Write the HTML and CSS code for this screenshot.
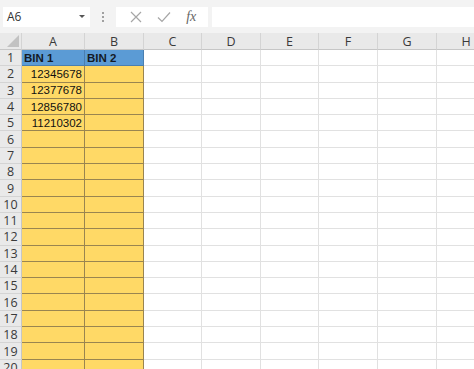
FILE: index.html
```html
<!DOCTYPE html>
<html lang="en">
<head>
  <meta charset="UTF-8">
  <title>Bins</title>
  <link rel="stylesheet" href="styles.css">
</head>
<body>

  <div class="toolbar">
    <div class="namebox">
      <span>A6</span>
      <span class="caret"></span>
    </div>
    <div class="grip">
      <i></i><i></i><i></i>
    </div>
    <div class="fbuttons">
      <svg width="12" height="12" viewBox="0 0 12 12"><path d="M1 1 L11 11 M11 1 L1 11" stroke="#a6a6a6" stroke-width="1.2" fill="none"/></svg>
      <svg width="14" height="12" viewBox="0 0 14 12"><path d="M1 6.5 L5 10.5 L13 1.5" stroke="#a6a6a6" stroke-width="1.2" fill="none"/></svg>
      <span class="fx">fx</span>
    </div>
    <div class="formula"></div>
  </div>

  <div class="sheet" id="sheet"></div>

  <script>
    const cols = ['A', 'B', 'C', 'D', 'E', 'F', 'G', 'H'];
    const data = { A2: '12345678', A3: '12377678', A4: '12856780', A5: '11210302' };
    const sheet = document.getElementById('sheet');

    function cell(cls, text) {
      const el = document.createElement('div');
      el.className = cls;
      if (text) el.textContent = text;
      sheet.appendChild(el);
    }

    cell('corner');
    cols.forEach(c => cell('colhead', c));

    for (let row = 1; row <= 20; row++) {
      cell('rowhead', row);
      cols.forEach((c, i) => {
        let cls = 'cell';
        if (i < 2) cls += row === 1 ? ' head' : ' bin';
        let text = data[c + row] || '';
        if (row === 1 && i < 2) text = 'BIN ' + (i + 1);
        if (c === 'A' && row > 1) cls += ' num';
        cell(cls, text);
      });
    }
  </script>

</body>
</html>
```

FILE: styles.css
```css
body {
  margin: 0;
  background: #fff;
  font-family: "Liberation Sans", Arial, sans-serif;
  overflow: hidden;
}

.toolbar {
  height: 33px;
  background: #f3f3f3;
  display: flex;
  align-items: center;
  padding: 0 0 0 3px;
  box-sizing: border-box;
}

.namebox {
  width: 87px;
  height: 20px;
  background: #fff;
  display: flex;
  align-items: center;
  justify-content: space-between;
  padding: 0 5px 0 4px;
  box-sizing: border-box;
  font-family: "Open Sans", sans-serif;
  font-size: 12px;
  color: #333;
}

.caret {
  width: 0;
  height: 0;
  border-left: 3px solid transparent;
  border-right: 3px solid transparent;
  border-top: 3px solid #555;
}

.grip {
  width: 26px;
  display: flex;
  flex-direction: column;
  align-items: center;
  gap: 2px;
}

.grip i {
  width: 2px;
  height: 2px;
  background: #a0a0a0;
}

.fbuttons {
  width: 92px;
  height: 20px;
  background: #fff;
  display: flex;
  align-items: center;
  justify-content: space-around;
  padding: 0 4px 0 6px;
  box-sizing: border-box;
}

.fx {
  font-family: "Liberation Serif", serif;
  font-style: italic;
  font-size: 14px;
  color: #666;
}

.formula {
  flex: 1;
  height: 20px;
  background: #fff;
  margin-left: 4px;
}

.sheet {
  display: grid;
  grid-template-columns: 22px 63px 59px 58px 59px 58px 59px 59px 59px;
  grid-template-rows: 17px repeat(20, 16.3px);
  font-size: 11.5px;
  color: #111;
}

.corner,
.colhead,
.rowhead {
  background: #e9e9e9;
  color: #3a3a3a;
  font-family: "Open Sans", sans-serif;
  font-size: 12.5px;
  display: flex;
  align-items: center;
  justify-content: center;
  box-sizing: border-box;
}

.corner {
  position: relative;
  border-right: 1px solid #d4d4d4;
  border-bottom: 1px solid #c6c6c6;
}

.corner::after {
  content: "";
  position: absolute;
  right: 2px;
  bottom: 2px;
  border-left: 12px solid transparent;
  border-bottom: 12px solid #c2c2c2;
}

.colhead {
  border-right: 1px solid #d4d4d4;
  border-bottom: 1px solid #c6c6c6;
}

.rowhead {
  border-bottom: 1px solid #d4d4d4;
  border-right: 1px solid #c6c6c6;
}

.cell {
  border-right: 1px solid #e1e1e1;
  border-bottom: 1px solid #e1e1e1;
  box-sizing: border-box;
  display: flex;
  align-items: center;
  padding: 0 2px;
  white-space: nowrap;
}

.cell.head {
  background: #5b9bd5;
  font-weight: bold;
  color: #141a26;
  border-color: #4a7fb0;
}

.cell.bin {
  background: #ffd966;
  border-color: #9a8550;
}

.cell.num {
  justify-content: flex-end;
}
```
